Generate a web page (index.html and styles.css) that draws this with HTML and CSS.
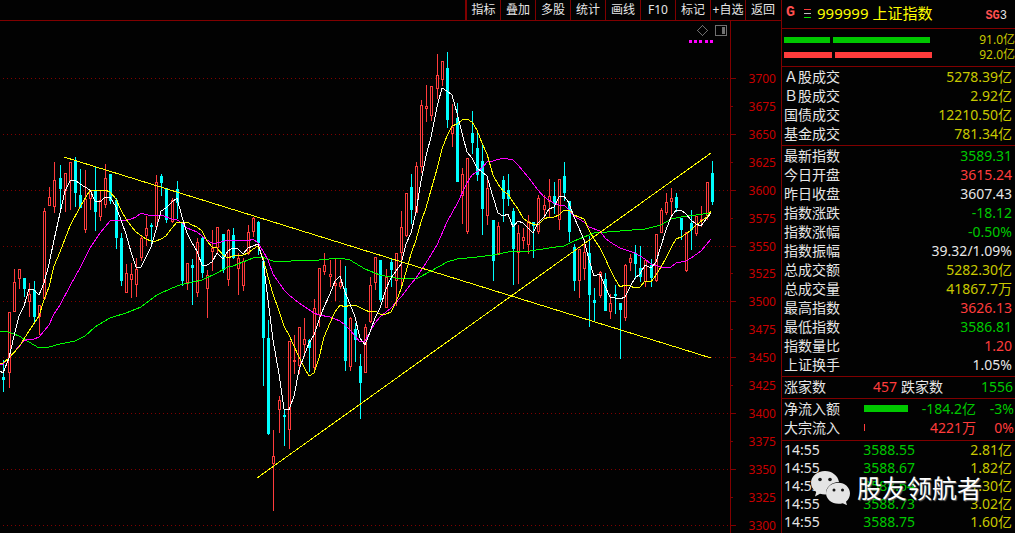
FILE: index.html
```html
<!DOCTYPE html>
<html lang="zh-CN">
  <head>
    <meta charset="UTF-8" />
    <meta name="viewport" content="width=device-width, initial-scale=1.0" />
    <title>上证指数 999999</title>
    <link rel="stylesheet" href="styles.css">
  </head>
  <body>
    <main class="terminal">
      <section class="chart-area">
        <nav class="toolbar">
          <button type="button">指标</button>
          <button type="button">叠加</button>
          <button type="button">多股</button>
          <button type="button">统计</button>
          <button type="button">画线</button>
          <button type="button">F10</button>
          <button type="button">标记</button>
          <button type="button">+自选</button>
          <button type="button">返回</button>
        </nav>
        <svg id="chart" class="chart" viewBox="0 21 781 512">
          <g id="grid"></g>
          <g id="candles"></g>
          <g id="lines"></g>
          <g class="chart-tools">
            <path class="diamond" d="M702.5 25.5l5 5-5 5-5-5z" />
            <rect class="pane" x="715.5" y="25.5" width="11" height="10" rx="1" />
            <rect class="pane-fill" x="722" y="27" width="3" height="7" />
          </g>
          <path class="marks" d="M689 40h3v3h-3zM694 40h3v3h-3zM699 40h3v3h-3zM705 40h3v3h-3zM710 40h3v3h-3z" />
        </svg>
      </section>
      <aside class="quote">
        <header class="title">
          <span class="flag">G</span>
          <svg class="menu" viewBox="0 0 7 9" width="7" height="9">
            <path stroke="#ff3c3c" d="M0 .5h7" />
            <path stroke="#c0c0c0" d="M0 4.5h7" />
            <path stroke="#00e600" d="M0 8.5h7" />
          </svg>
          <h1>999999 上证指数</h1>
          <span class="badge"><b>SG</b>3</span>
        </header>
        <section class="volume">
          <div class="volume-row green">
            <i class="short"></i><i class="long"></i><span>91.0亿</span>
          </div>
          <div class="volume-row red">
            <i class="short"></i><i class="long"></i><span>92.0亿</span>
          </div>
        </section>
        <table class="block">
          <tr><th>Ａ股成交</th><td class="c-yellow">5278.39亿</td></tr>
          <tr><th>Ｂ股成交</th><td class="c-yellow">2.92亿</td></tr>
          <tr><th>国债成交</th><td class="c-yellow">12210.50亿</td></tr>
          <tr><th>基金成交</th><td class="c-yellow">781.34亿</td></tr>
        </table>
        <table class="block">
          <tr><th>最新指数</th><td class="c-green">3589.31</td></tr>
          <tr><th>今日开盘</th><td class="c-red">3615.24</td></tr>
          <tr><th>昨日收盘</th><td>3607.43</td></tr>
          <tr><th>指数涨跌</th><td class="c-green">-18.12</td></tr>
          <tr><th>指数涨幅</th><td class="c-green">-0.50%</td></tr>
          <tr><th>指数振幅</th><td>39.32/1.09%</td></tr>
          <tr><th>总成交额</th><td class="c-yellow">5282.30亿</td></tr>
          <tr><th>总成交量</th><td class="c-yellow">41867.7万</td></tr>
          <tr><th>最高指数</th><td class="c-red">3626.13</td></tr>
          <tr><th>最低指数</th><td class="c-green">3586.81</td></tr>
          <tr><th>指数量比</th><td class="c-red">1.20</td></tr>
          <tr><th>上证换手</th><td>1.05%</td></tr>
        </table>
        <dl class="breadth">
          <dt>涨家数</dt>
          <dd class="c-red">457</dd>
          <dt>跌家数</dt>
          <dd class="c-green">1556</dd>
        </dl>
        <table class="block flow">
          <tr class="c-green">
            <th>净流入额</th>
            <td class="gauge"><i class="bar"></i></td>
            <td class="sum">-184.2亿</td>
            <td class="share">-3%</td>
          </tr>
          <tr class="c-red">
            <th>大宗流入</th>
            <td class="gauge"><i class="bar thin"></i></td>
            <td class="sum">4221万</td>
            <td class="share">0%</td>
          </tr>
        </table>
        <table class="block ticks">
          <tr><th>14:55</th><td class="price">3588.55</td><td class="c-yellow">2.81亿</td></tr>
          <tr><th>14:55</th><td class="price">3588.67</td><td class="c-yellow">1.82亿</td></tr>
          <tr><th>14:55</th><td class="price">3588.64</td><td class="c-yellow">1.30亿</td></tr>
          <tr><th>14:55</th><td class="price">3588.73</td><td class="c-yellow">3.02亿</td></tr>
          <tr><th>14:55</th><td class="price">3588.75</td><td class="c-yellow">1.60亿</td></tr>
        </table>
        <div class="watermark">
          <svg viewBox="0 0 40 34" width="40" height="34">
            <path fill="#e4e4e4" d="M14 0C6.300 0 0 5.200 0 11.800c0 3.700 2 7 5.200 9.200L4 25.500l5-2.800c1.600.5 3.300.8 5 .8h1C14.300 16.500 20.500 11 28 11C27 4.700 21 0 14 0z" />
            <path fill="#e4e4e4" d="M27.500 11.800C20.500 11.800 15 16.500 15 22.300s5.500 10.500 12.500 10.500c1.500 0 2.900-.2 4.200-.6l4.300 2-1-3.500c2.500-1.900 4-4.900 4-8.400 0-5.800-5.200-10.500-11.500-10.500z" />
            <g fill="#141414">
              <circle cx="9" cy="8.500" r="1.800" />
              <circle cx="19" cy="8.500" r="1.800" />
              <circle cx="23" cy="19" r="1.500" />
              <circle cx="31.500" cy="19" r="1.500" />
            </g>
          </svg>
          <span>股友领航者</span>
        </div>
      </aside>
    </main>
    <script src="chart.js"></script>
  </body>
</html>
```
FILE: styles.css
```css
* {
  box-sizing: border-box;
}
body {
  margin: 0;
  background-color: #020202;
  color: #e6e6e6;
  font-family: "Noto Sans", "Noto Sans CJK SC", sans-serif;
  font-size: 14px;
}
.terminal {
  display: grid;
  grid-template-columns: 1fr 234px;
}
.chart-area {
  min-width: 0;
}
.toolbar {
  display: flex;
  justify-content: flex-end;
  height: 21px;
  padding-right: 1px;
  border-bottom: 1px solid #800000;
}
.toolbar button {
  width: 35px;
  padding: 0;
  border: none;
  border-left: 1px solid #800000;
  background: none;
  color: #e6e6e6;
  font-family: inherit;
  font-size: 12px;
  line-height: 18px;
  white-space: nowrap;
}
.toolbar button:first-child {
  border-left-width: 2px;
}
.toolbar button:hover {
  background-color: #300000;
}

/* chart */
.chart {
  display: block;
  width: 100%;
  shape-rendering: crispEdges;
}
.grid-line {
  stroke: #800000;
  stroke-dasharray: 1 3;
}
.axis {
  stroke: #800000;
}
.axis-label {
  fill: #c80000;
  font-size: 12px;
  text-anchor: end;
}
.up {
  fill: #020202;
  stroke: #ff3c3c;
}
.down {
  fill: #00ffff;
  stroke: #00ffff;
}
.line {
  fill: none;
  stroke-width: 1;
}
.ma5 {
  stroke: #ffffff;
}
.ma10,
.trend {
  stroke: #ffff00;
}
.ma20 {
  stroke: #ff00ff;
}
.ma60 {
  stroke: #00ff00;
}
.diamond,
.pane {
  fill: none;
  stroke: #707070;
}
.pane-fill {
  fill: #707070;
}
.marks {
  fill: #ff00ff;
}

/* quote panel */
.quote {
  position: relative;
  border-left: 1px solid #800000;
}
.title {
  display: flex;
  align-items: center;
  height: 29px;
  padding: 0 8px 4px 4px;
  border-bottom: 1px solid #800000;
}
.title h1 {
  flex: 1;
  margin: 0;
  color: #ffff00;
  font-size: 15px;
  font-weight: normal;
}
.flag {
  color: #ff5050;
  font-family: "Liberation Mono", monospace;
  font-size: 15px;
  font-weight: bold;
}
.menu {
  margin: 2px 6px 0 9px;
}
.badge {
  padding-top: 7px;
  font-family: "Liberation Mono", monospace;
  font-size: 12px;
}
.badge b {
  color: #ff5050;
}
.volume {
  height: 38px;
  padding-top: 3px;
  border-bottom: 1px solid #800000;
}
.volume-row {
  display: flex;
  align-items: center;
  height: 15px;
  padding-left: 2px;
}
.volume-row i {
  height: 6px;
  margin-right: 3px;
}
.volume-row span {
  flex: 1;
  color: #c8c800;
  font-size: 12px;
  line-height: 15px;
  text-align: right;
}
.short {
  width: 46px;
}
.long {
  width: 97px;
}
.red .short {
  width: 48px;
}
.green i {
  background-color: #00c800;
}
.red i {
  background-color: #ff3c3c;
}
.block {
  width: 100%;
  border-collapse: separate;
  border-spacing: 0;
  padding: 0 3px 2px 2px;
  border-bottom: 1px solid #800000;
}
.block th,
.block td {
  height: 19px;
  padding: 0;
  font-weight: normal;
  line-height: 19px;
  white-space: nowrap;
}
.block th {
  color: #e6e6e6;
  text-align: left;
}
.block td {
  text-align: right;
}
.c-yellow {
  color: #c8c800;
}
.c-green {
  color: #00c800;
}
.c-red {
  color: #ff3c3c;
}
.breadth {
  display: grid;
  grid-template-columns: 56px 57px 56px 1fr;
  margin: 0;
  padding: 0 2px 2px;
  border-bottom: 1px solid #800000;
  line-height: 19px;
}
.breadth dd {
  margin: 0;
  text-align: right;
}
.breadth dt + dd + dt {
  padding-left: 4px;
}
.flow {
  table-layout: fixed;
  padding: 0 1px 3px 2px;
}
.flow th {
  width: 80px;
}
.flow .gauge {
  width: 46px;
  text-align: left;
}
.flow .share {
  width: 38px;
}
.bar {
  display: block;
  width: 44px;
  height: 7px;
  background-color: #00c800;
}
.bar.thin {
  width: 1px;
  background-color: #ff3c3c;
}
.ticks {
  border-bottom: none;
  padding-bottom: 0;
}
.ticks th,
.ticks td {
  height: 18px;
  line-height: 18px;
}
.ticks th {
  width: 50px;
}
.ticks .price {
  width: 81px;
  color: #00c800;
}
.watermark {
  position: absolute;
  right: 33px;
  bottom: 27px;
  display: flex;
  align-items: center;
  gap: 6px;
  color: #ffffff;
  font-size: 25px;
  line-height: 36px;
  text-shadow: 1px 1px 1px #606060;
}
```
FILE: chart.js
```js
const NS = "http://www.w3.org/2000/svg";

// [x, high, body top, body bottom, low], the cyan (falling) ones end with 1
const candles = [
  [3,360,377,380,392,1],[9,312,312,373,388],[14,269,282,312,312],[19,269,269,279,289],
  [24,278,278,289,297,1],[29,283,294,302,317],[34,281,290,317,324,1],[39,305,305,317,335],
  [44,208,211,299,299],[49,187,197,206,206],[54,162,180,207,213],[60,165,178,189,210,1],
  [65,173,173,191,212],[70,162,162,181,210],[75,157,161,193,207,1],[80,169,195,208,208,1],
  [85,170,199,230,233],[90,190,190,199,210],[95,166,190,212,231,1],[100,190,200,217,221],
  [105,164,178,205,208],[110,174,174,201,204,1],[116,198,200,238,249,1],[121,233,238,281,286,1],
  [126,264,273,293,293],[131,263,274,280,298],[136,258,269,285,297],[141,236,238,258,261],
  [146,216,228,236,246],[151,223,225,227,247,1],[156,175,182,227,229],[161,174,176,183,196,1],
  [166,188,188,220,223,1],[172,198,200,222,223],[177,181,189,203,219,1],[182,223,223,281,286,1],
  [187,263,263,283,290],[192,259,265,268,305,1],[197,238,242,293,297],[202,237,238,273,278,1],
  [207,270,275,289,318],[212,230,248,252,271],[217,227,227,248,253],[223,234,234,270,273,1],
  [228,229,230,280,286],[233,228,235,258,259,1],[238,253,258,269,295],[243,258,261,286,291],
  [248,225,232,254,255],[253,217,218,232,237],[258,221,222,243,255,1],[263,257,261,338,386,1],
  [268,320,338,434,435,1],[273,430,456,464,511],[279,396,400,410,433],[284,410,415,416,446,1],
  [289,341,341,430,449],[294,335,360,362,374],[299,327,327,366,374],[304,318,339,345,357],
  [309,339,340,348,372,1],[314,299,308,368,371],[319,268,268,315,327],[324,253,265,272,275],
  [330,260,274,277,287],[335,258,283,286,301],[340,260,282,287,289],[345,266,288,361,371,1],
  [350,317,318,367,371],[355,323,329,340,362,1],[360,354,366,383,419,1],[365,324,327,373,373],
  [370,277,285,322,323],[375,257,257,283,290],[380,260,260,300,302,1],[386,269,277,308,308],
  [391,258,262,270,287,1],[396,253,253,281,306],[401,211,227,253,285],[406,193,193,236,237],
  [411,174,187,210,224,1],[416,162,166,213,213],[421,100,105,167,173],[426,85,106,109,122],
  [431,86,86,116,121],[437,54,75,89,99],[442,61,61,80,86],[447,52,68,120,128,1],
  [452,104,127,134,147],[457,103,118,182,182,1],[462,168,174,196,224],[467,158,158,232,234],
  [472,111,133,143,154,1],[477,133,148,175,181,1],[482,145,161,209,235,1],[487,179,188,216,225],
  [493,220,220,261,281,1],[498,222,226,255,255],[503,176,180,199,222,1],[508,174,190,199,206,1],
  [513,208,211,249,285,1],[518,225,233,253,284],[523,228,237,241,249],[528,215,221,245,254],
  [533,222,222,226,258,1],[538,195,198,232,234],[544,195,205,210,218],[549,179,196,202,217],
  [554,182,196,204,214,1],[559,179,179,220,230],[564,162,176,193,201,1],[569,201,201,232,242,1],
  [574,244,247,281,291,1],[579,249,249,281,298],[584,239,252,269,280],[589,236,253,295,327,1],
  [594,288,300,303,322,1],[600,271,272,296,298],[605,273,279,311,311,1],[610,294,303,312,319],
  [615,285,294,295,314,1],[620,303,303,310,359,1],[625,264,265,318,321],[630,254,258,263,271],
  [635,245,253,264,279,1],[640,246,268,277,282,1],[645,260,260,282,287],[651,259,265,278,287,1],
  [656,234,234,281,282],[661,208,210,233,233],[666,193,202,213,215],[671,188,198,202,218],
  [676,193,197,208,212,1],[681,218,218,230,240,1],[686,232,232,271,272],[691,210,223,230,250,1],
  [696,216,216,234,236],[701,206,219,221,227],[707,182,182,216,220],[712,161,173,202,205,1],
];

const lines = {
  ma60: "0,331 5,331 14,334 19,336 29,342 39,348 49,347 60,344 75,341 85,336 95,327 110,318 126,313 141,307 157,295 172,288 180,285 202,280 217,273 228,267 233,266 243,262 253,258 262,257 273,261 284,262 299,260 319,260 340,258 350,260 365,269 380,275 396,278 418,278 431,271 447,262 457,259 477,257 493,255 508,252 530,251 549,248 564,246 574,241 584,237 594,233 620,231 645,229 661,225 671,219 681,217 696,215 711,213",
  ma20: "0,365 3,364 9,358 14,352 24,341 29,339 34,339 39,337 49,325 54,314 60,305 70,286 80,268 90,248 100,233 105,227 110,221 116,220 121,221 131,219 136,217 141,213 151,216 161,215 172,219 177,220 182,223 187,228 197,232 202,236 207,240 212,243 217,243 228,240 238,240 248,241 253,239 258,243 263,251 268,260 273,274 284,290 289,295 299,303 314,313 319,315 330,317 340,321 345,325 350,330 355,336 360,342 365,341 370,332 375,323 380,317 386,312 391,308 401,297 411,284 416,278 426,263 437,245 447,222 457,204 467,183 472,175 482,168 487,162 493,161 503,158 513,160 518,165 528,177 538,190 544,197 554,203 559,205 564,205 569,210 574,216 584,222 589,227 600,231 605,238 610,242 620,248 635,253 645,259 651,264 661,267 666,268 671,267 676,263 686,261 691,258 701,251 711,239",
  ma10: "0,363 3,363 9,358 19,347 29,331 39,316 44,300 49,287 54,266 60,252 70,226 80,207 90,190 95,190 100,191 105,190 110,192 116,199 121,210 126,219 131,226 136,232 146,239 151,241 156,241 161,239 166,236 172,228 177,222 182,223 187,222 192,225 197,227 202,231 207,241 212,247 217,248 223,255 228,258 233,256 243,255 248,253 253,249 258,246 263,258 268,277 273,294 279,311 284,326 289,335 294,346 299,357 304,367 309,376 314,373 319,358 324,337 330,323 335,312 340,305 345,307 350,305 355,305 365,310 370,312 375,311 380,314 386,314 391,312 396,302 401,289 406,272 411,254 416,240 421,222 426,208 431,190 437,169 442,149 447,136 452,126 457,124 462,120 467,119 472,122 477,130 482,143 487,154 493,175 498,184 503,191 508,194 513,202 518,209 523,218 528,222 533,224 538,225 544,219 549,217 554,217 559,215 564,210 569,210 574,215 584,219 589,230 594,239 600,248 605,258 610,269 615,279 620,287 625,285 630,286 635,288 640,287 645,281 651,282 656,275 661,267 666,258 671,248 676,239 681,237 686,234 691,230 696,225 707,217 711,211",
  ma5: "0,371 3,373 9,358 14,336 19,316 24,306 29,289 34,290 39,295 44,283 49,264 54,240 60,213 65,191 70,181 75,180 80,184 85,187 90,190 95,201 100,202 105,197 110,197 116,207 121,220 126,234 131,252 136,267 141,267 146,257 151,247 156,230 161,211 166,208 172,202 177,198 182,217 187,233 192,243 197,251 202,265 207,265 212,262 217,253 223,259 228,251 233,248 238,249 243,254 248,248 253,246 258,244 263,260 268,300 273,340 279,374 284,409 289,410 294,396 299,370 304,356 309,343 314,335 319,320 324,307 330,294 335,281 340,276 345,292 350,304 355,317 360,338 365,345 370,332 375,318 380,308 386,289 391,278 396,271 401,264 406,244 411,233 416,212 421,181 426,156 431,137 437,107 442,88 447,91 452,95 457,113 462,133 467,152 472,158 477,168 482,172 487,176 493,197 498,213 503,216 508,214 513,227 518,221 523,223 528,228 533,233 538,223 544,217 549,209 554,207 559,197 564,196 569,203 574,217 579,228 584,240 589,260 594,276 600,274 605,286 610,297 615,298 620,299 625,297 630,287 635,278 640,274 645,265 651,268 656,262 661,246 666,230 671,217 676,210 681,210 686,214 691,220 696,224 701,226 707,218 711,213",
};

const trends = ["64,157 711,358", "257,478 711,153"];

function add(parent, tag, attrs, text) {
  const el = document.createElementNS(NS, tag);
  for (const key in attrs) el.setAttribute(key, attrs[key]);
  if (text) el.textContent = text;
  document.getElementById(parent).appendChild(el);
}

// price axis
add("grid", "path", { class: "axis", d: "M730.5 21V533" });
for (let price = 3300; price <= 3700; price += 25) {
  const y = Math.round(525 - (price - 3300) * 1.118) + 0.5;
  const major = price % 50 === 0;
  if (major) {
    add("grid", "path", { class: "grid-line", d: `M3 ${y}H730` });
  }
  add("grid", "path", { class: "axis", d: `M731 ${y}h${major ? 5 : 2}` });
  add("grid", "text", { class: "axis-label", x: 776, y: y + 4 }, String(price));
}

candles.forEach(([x, high, top, bottom, low, down]) => {
  const cls = down ? "down" : "up";
  add("candles", "path", { class: cls, d: `M${x + 0.5} ${high}V${low}` });
  add("candles", "rect", {
    class: cls,
    x: x - 0.5,
    y: top + 0.5,
    width: 2,
    height: Math.max(bottom - top - 1, 1),
  });
});

for (const name in lines) {
  add("lines", "polyline", { class: "line " + name, points: lines[name] });
}
trends.forEach((points) => {
  add("lines", "polyline", { class: "line trend", points });
});
```
